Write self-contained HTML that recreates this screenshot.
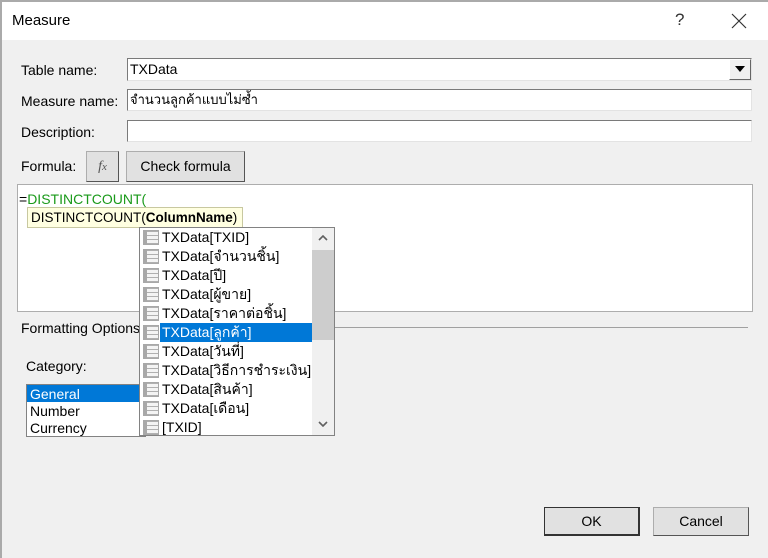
<!DOCTYPE html>
<html><head><meta charset="utf-8"><style>
*{margin:0;padding:0;box-sizing:border-box}
body{width:768px;height:558px;overflow:hidden;background:#f0f0f0;font-family:"Liberation Sans","Noto Sans CJK SC",sans-serif;font-size:13px;color:#000;position:relative}
.a{position:absolute}
.inp{position:absolute;background:#fff;border:1px solid #7a7a7a;border-right-color:#e3e3e3;border-bottom-color:#e3e3e3;padding:1px 2px;line-height:18px;font-size:13px}
.btn{position:absolute;background:#e1e1e1;border:1px solid #adadad;border-right-color:#555;border-bottom-color:#555;text-align:center;font-size:14px}
.row{position:absolute;left:0;width:172px;height:19px;line-height:18px;font-size:14px;padding-left:22px;white-space:nowrap}
.ic{position:absolute;left:3px;top:2px;width:16px;height:15px;background:repeating-linear-gradient(#b0b0b0 0 1px,#f4f4f4 1px 4px);border:1px solid #a8a8a8;border-left:4px solid #a8a8a8}
</style></head><body>
<div class="a" style="left:0;top:0;width:768px;height:2px;background:#aaa"></div>
<div class="a" style="left:0;top:0;width:2px;height:558px;background:#aaa"></div>
<div class="a" style="left:2px;top:2px;width:766px;height:38px;background:#fff"></div>
<div class="a" style="left:12px;top:12px;font-size:15px">Measure</div>
<div class="a" style="left:675px;top:10px;font-size:17px;color:#333">?</div>
<svg class="a" style="left:731px;top:13px" width="16" height="16"><path d="M1 1L15 15M15 1L1 15" stroke="#333" stroke-width="1.2"/></svg>

<div class="a" style="left:21px;top:62px;font-size:14px">Table name:</div>
<div class="inp" style="left:127px;top:58px;width:625px;height:23px;font-size:14px">TXData</div>
<div class="a" style="left:729px;top:59px;width:22px;height:21px;background:#f0f0f0;border:1px solid #fff;border-right-color:#666;border-bottom-color:#666"></div>
<svg class="a" style="left:735px;top:66px" width="10" height="6"><path d="M0 0H10L5 6Z" fill="#000"/></svg>

<div class="a" style="left:21px;top:93px;font-size:14px">Measure name:</div>
<div class="inp" style="left:127px;top:89px;width:625px;height:22px">จำนวนลูกค้าแบบไม่ซ้ำ</div>
<div class="a" style="left:21px;top:124px;font-size:14px">Description:</div>
<div class="inp" style="left:127px;top:120px;width:625px;height:22px"></div>

<div class="a" style="left:21px;top:158px;font-size:14px">Formula:</div>
<div class="btn" style="left:86px;top:151px;width:33px;height:31px;line-height:29px;font-family:'Liberation Serif',serif;font-style:italic;color:#555">f<span style="font-size:11px">x</span></div>
<div class="btn" style="left:126px;top:151px;width:119px;height:31px;line-height:29px">Check formula</div>

<div class="a" style="left:17px;top:184px;width:736px;height:128px;background:#fff;border:1px solid #adadad"></div>
<div class="a" style="left:19px;top:191px;font-size:14px">=<span style="color:#1a9a1a">DISTINCTCOUNT(</span></div>
<div class="a" style="left:27px;top:207px;width:216px;height:21px;background:#ffffe1;border:1px solid #c8c8a0;font-size:13.5px;line-height:19px;padding-left:3px;white-space:nowrap">DISTINCTCOUNT(<b>ColumnName</b>)</div>

<div class="a" style="left:21px;top:320px;font-size:14px">Formatting Options</div>
<div class="a" style="left:334px;top:327px;width:414px;height:1px;background:#a0a0a0"></div>
<div class="a" style="left:26px;top:358px;font-size:14px">Category:</div>
<div class="a" style="left:26px;top:384px;width:120px;height:53px;background:#fff;border:1px solid #828282"></div>
<div class="a" style="left:27px;top:385px;width:118px;height:17px;background:#0078d7"></div>
<div class="a" style="left:30px;top:386px;font-size:14px;color:#fff">General</div>
<div class="a" style="left:30px;top:403px;font-size:14px">Number</div>
<div class="a" style="left:30px;top:420px;font-size:14px">Currency</div>

<div class="a" style="left:139px;top:227px;width:196px;height:209px;background:#fff;border:1px solid #828282">
 <div class="row" style="top:0"><span class="ic"></span>TXData[TXID]</div>
 <div class="row" style="top:19px"><span class="ic"></span>TXData[จำนวนชิ้น]</div>
 <div class="row" style="top:38px"><span class="ic"></span>TXData[ปี]</div>
 <div class="row" style="top:57px"><span class="ic"></span>TXData[ผู้ขาย]</div>
 <div class="row" style="top:76px"><span class="ic"></span>TXData[ราคาต่อชิ้น]</div>
 <div class="row" style="top:95px"><span class="ic"></span><span style="position:absolute;left:20px;top:0;width:152px;height:19px;background:#0078d7"></span><span style="position:relative;color:#fff">TXData[ลูกค้า]</span></div>
 <div class="row" style="top:114px"><span class="ic"></span>TXData[วันที่]</div>
 <div class="row" style="top:133px"><span class="ic"></span>TXData[วิธีการชำระเงิน]</div>
 <div class="row" style="top:152px"><span class="ic"></span>TXData[สินค้า]</div>
 <div class="row" style="top:171px"><span class="ic"></span>TXData[เดือน]</div>
 <div class="row" style="top:190px"><span class="ic"></span>[TXID]</div>
 <div class="a" style="left:172px;top:0;width:22px;height:207px;background:#f0f0f0"></div>
 <div class="a" style="left:172px;top:22px;width:22px;height:90px;background:#cdcdcd"></div>
 <svg class="a" style="left:178px;top:7px" width="10" height="6"><path d="M1 5L5 1L9 5" stroke="#606060" stroke-width="1.6" fill="none"/></svg>
 <svg class="a" style="left:178px;top:193px" width="10" height="6"><path d="M1 1L5 5L9 1" stroke="#606060" stroke-width="1.6" fill="none"/></svg>
</div>

<div class="btn" style="left:544px;top:507px;width:96px;height:29px;line-height:27px;border:2px solid #333;border-width:1px 2px 2px 1px">OK</div>
<div class="btn" style="left:653px;top:507px;width:96px;height:29px;line-height:27px">Cancel</div>
</body></html>
